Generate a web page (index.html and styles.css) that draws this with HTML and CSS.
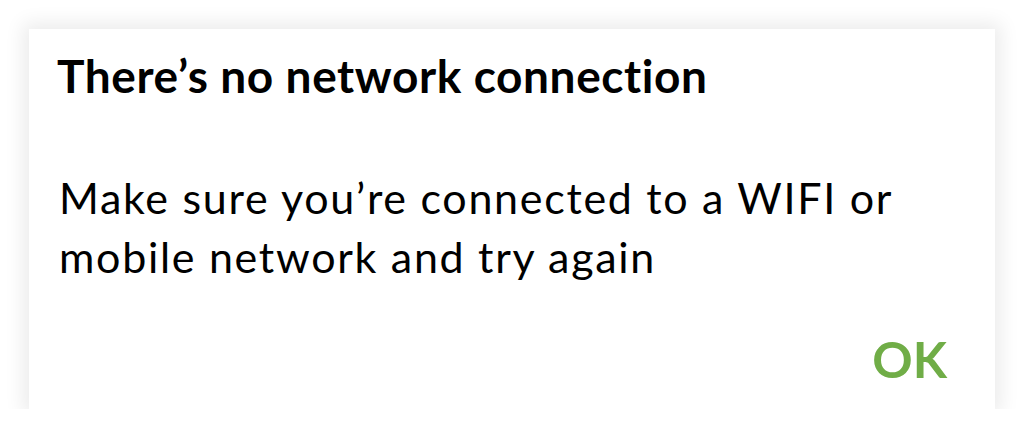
FILE: index.html
```html
<!DOCTYPE html>
<html lang="en">
<head>
<meta charset="utf-8">
<title>No network connection</title>
<link rel="stylesheet" href="styles.css">
</head>
<body>
<div class="page">
  <div class="dialog" role="alertdialog" aria-labelledby="dlg-title">
    <h1 class="dialog-title" id="dlg-title">There’s no network connection</h1>
    <p class="dialog-message">Make sure you’re connected to a WIFI or mobile network and try again</p>
    <div class="dialog-actions">
      <button class="dialog-button" type="button">OK</button>
    </div>
  </div>
</div>
</body>
</html>
```

FILE: styles.css
```css
html, body {
  margin: 0;
  padding: 0;
  background: #ffffff;
}

body {
  font-family: "Lato", "Open Sans", "Liberation Sans", sans-serif;
  color: #000000;
}

.page {
  padding: 29px 0 0 29px;
}

.dialog {
  width: 966px;
  height: 380px;
  box-sizing: border-box;
  background: #ffffff;
  box-shadow: 0 0 18px 6px rgba(0, 0, 0, 0.08);
  padding: 20px 48px 20px 28px;
  display: flex;
  flex-direction: column;
}

.dialog-title {
  margin: 0;
  font-size: 46px;
  line-height: 54px;
  font-weight: 700;
  letter-spacing: 0.6px;
}

.dialog-message {
  margin: 65px 0 0 2px;
  font-size: 43px;
  line-height: 59px;
  font-weight: 400;
  letter-spacing: 1.7px;
}

.dialog-actions {
  margin-top: auto;
  display: flex;
  justify-content: flex-end;
}

.dialog-button {
  border: 0;
  background: none;
  padding: 0;
  font-family: inherit;
  font-size: 50px;
  line-height: 60px;
  font-weight: 700;
  color: #70ad47;
  cursor: pointer;
}
```
